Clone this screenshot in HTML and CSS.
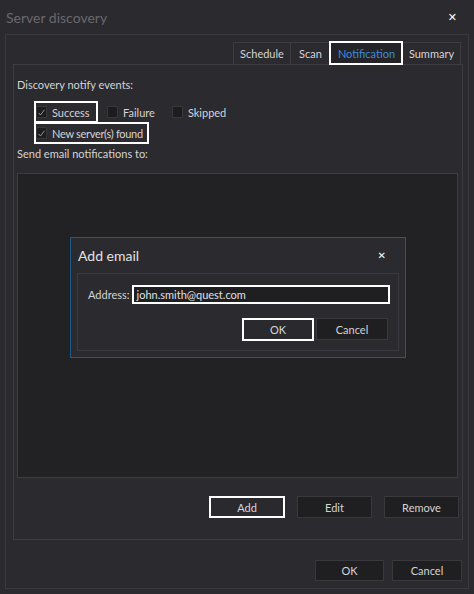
FILE: index.html
```html
<!DOCTYPE html>
<html>
<head>
<meta charset="utf-8">
<link rel="stylesheet" href="styles.css">
</head>
<body>
<div class="titlebar">
  <span class="title">Server discovery</span>
  <span class="close">✕</span>
</div>
<div class="frame">
  <div class="tabs">
    <div class="tab t-schedule">Schedule</div>
    <div class="tab t-scan">Scan</div>
    <div class="tab t-notif active">Notification</div>
    <div class="tab t-summary">Summary</div>
  </div>
  <div class="panel">
    <div class="label first">Discovery notify events:</div>
    <div class="checks">
      <div class="row">
        <div class="cb hl hl-success"><span class="box"><svg viewBox="0 0 11 11" width="11" height="11"><polyline points="2,6 4.3,8.6 9,2.2" fill="none" stroke="#a0a0a0" stroke-width="1.1"/></svg></span><span>Success</span></div>
        <div class="cb plain c-failure"><span class="box"></span><span>Failure</span></div>
        <div class="cb plain c-skipped"><span class="box"></span><span>Skipped</span></div>
      </div>
      <div class="row row2">
        <div class="cb hl hl-new"><span class="box"><svg viewBox="0 0 11 11" width="11" height="11"><polyline points="2,6 4.3,8.6 9,2.2" fill="none" stroke="#a0a0a0" stroke-width="1.1"/></svg></span><span class="tight">New server(s) found</span></div>
      </div>
    </div>
    <div class="label second">Send email notifications to:</div>
    <div class="list"></div>
    <div class="btnrow">
      <div class="btn b-add focus">Add</div>
      <div class="btn b-edit">Edit</div>
      <div class="btn b-remove">Remove</div>
    </div>
  </div>
  <div class="footer">
    <div class="btn f-ok">OK</div>
    <div class="btn f-cancel">Cancel</div>
  </div>
</div>

<div class="dialog">
  <div class="dlg-title">
    <span class="dlg-name">Add email</span>
    <span class="dlg-close">✕</span>
  </div>
  <div class="dlg-body">
    <div class="addr-row">
      <span class="addr-label">Address:</span>
      <div class="input">john.smith@quest.com</div>
    </div>
    <div class="dlg-btns">
      <div class="btn d-ok focus">OK</div>
      <div class="btn d-cancel">Cancel</div>
    </div>
  </div>
</div>
</body>
</html>
```

FILE: styles.css
```css
* { box-sizing: border-box; }
html, body { margin: 0; padding: 0; }
body {
  width: 474px;
  height: 594px;
  overflow: hidden;
  position: relative;
  background: #2b2a2e;
  font-family: Lato, "Open Sans", sans-serif;
  font-size: 11px;
  color: #d4d4d6;
  white-space: nowrap;
}
.titlebar {
  height: 34px;
  display: flex;
  align-items: center;
  justify-content: space-between;
  padding: 0 17px 0 6px;
}
.title {
  font-size: 14px;
  color: #69686d;
}
.close {
  color: #ffffff;
  font-size: 11px;
  font-weight: bold;
  font-family: "DejaVu Sans", sans-serif;
}
.frame {
  margin-left: 5px;
  width: 464px;
  height: 555px;
  border: 1px solid #3b3a3e;
  padding: 7px 5px 0 7px;
  display: flex;
  flex-direction: column;
}
.tabs {
  display: flex;
  justify-content: flex-end;
  height: 22px;
  padding-right: 2px;
}
.tab {
  height: 22px;
  border-top: 1px solid #3d3c40;
  border-left: 1px solid #3d3c40;
  display: flex;
  align-items: center;
  justify-content: center;
  color: #d4d4d6;
  position: relative;
}
.t-schedule { width: 57px; }
.t-scan { width: 40px; }
.t-notif { width: 72px; }
.t-summary { width: 59px; border-right: 1px solid #3d3c40; }
.tab.active {
  color: #3b8bd9;
  background: #242327;
  outline: 2px solid #ffffff;
  outline-offset: -1px;
  z-index: 1;
}
.panel {
  height: 476px;
  border: 1px solid #3d3c40;
  padding: 12px 4px 0 3px;
  display: flex;
  flex-direction: column;
}
.label { line-height: 16px; height: 16px; }
.checks { margin-top: 8px; padding-left: 17px; }
.row { display: flex; align-items: center; height: 22px; }
.row2 { margin-top: -1px; }
.cb {
  display: flex;
  align-items: center;
  height: 22px;
}
.hl {
  border: 2px solid #ffffff;
}
.hl-success { width: 64px; }
.hl-new { padding-right: 4px; }
.tight { letter-spacing: -0.3px; }
.box {
  width: 11px;
  height: 12px;
  background: #1d1d20;
  border: 1px solid #38373b;
  margin-right: 5px;
  display: flex;
  align-items: center;
  justify-content: center;
  flex: none;
}
.c-failure { margin-left: 9px; }
.c-skipped { margin-left: 17px; }
.second { margin-top: 2px; }
.list {
  margin-top: 11px;
  height: 305px;
  background: #222124;
  border: 1px solid #3d3c40;
}
.btnrow {
  margin-top: 18px;
  display: flex;
  justify-content: flex-end;
  gap: 12px;
  margin-right: -1px;
}
.btn {
  height: 22px;
  background: #1f1e21;
  border: 1px solid #39383c;
  display: flex;
  align-items: center;
  justify-content: center;
  color: #d4d4d6;
}
.btn.focus {
  border: 2px solid #ffffff;
  background: #2a292d;
}
.b-add { width: 76px; }
.b-edit { width: 75px; }
.b-remove { width: 75px; }
.footer {
  margin-top: 20px;
  display: flex;
  justify-content: flex-end;
  gap: 8px;
  margin-right: 1px;
}
.f-ok { width: 69px; height: 21px; }
.f-cancel { width: 70px; height: 21px; }

.dialog {
  position: absolute;
  left: 70px;
  top: 237px;
  width: 336px;
  height: 121px;
  background: #2b2a2e;
  border: 1px solid #1f5b88;
  padding: 0 6px 6px 6px;
  display: flex;
  flex-direction: column;
}
.dlg-title {
  height: 35px;
  display: flex;
  align-items: center;
  justify-content: space-between;
  padding: 0 13px 0 1px;
}
.dlg-name { font-size: 14px; color: #e2e2e4; }
.dlg-close {
  color: #ffffff;
  font-size: 10px;
  font-weight: bold;
  font-family: "DejaVu Sans", sans-serif;
}
.dlg-body {
  flex: 1;
  border: 1px solid #3b3a3e;
  padding: 11px 11px 0 10px;
}
.addr-row {
  display: flex;
  align-items: center;
  gap: 2px;
}
.addr-label { color: #d4d4d6; }
.input {
  width: 258px;
  height: 19px;
  margin-left: auto;
  border: 2px solid #ffffff;
  background: #1f1e21;
  display: flex;
  align-items: center;
  padding-left: 3px;
  color: #e0e0e2;
  flex: none;
}
.dlg-btns {
  margin-top: 14px;
  display: flex;
  justify-content: flex-end;
  gap: 2px;
  margin-right: -1px;
}
.d-ok { width: 72px; height: 23px; }
.d-cancel { width: 72px; height: 22px; }
```
